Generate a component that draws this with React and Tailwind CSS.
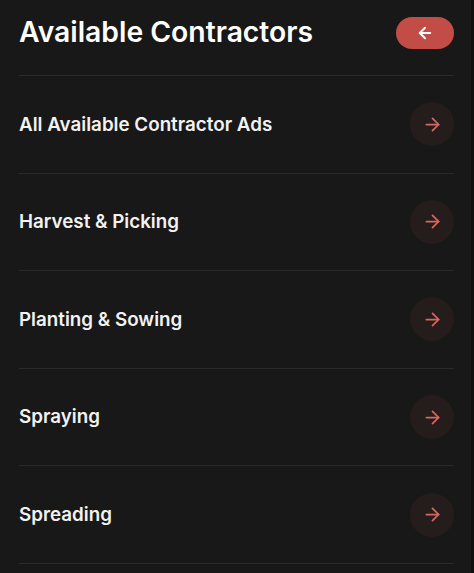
import React from 'react';

const categories = [
  'All Available Contractor Ads',
  'Harvest & Picking',
  'Planting & Sowing',
  'Spraying',
  'Spreading',
];

const ArrowRight = () => (
  <svg width="21" height="21" viewBox="0 0 24 24" fill="none" stroke="currentColor" strokeWidth="2" strokeLinecap="round" strokeLinejoin="round">
    <path d="M5 12h14" />
    <path d="m12 5 7 7-7 7" />
  </svg>
);

const ArrowLeft = () => (
  <svg width="18" height="18" viewBox="0 0 24 24" fill="none" stroke="currentColor" strokeWidth="2.5" strokeLinecap="round" strokeLinejoin="round">
    <path d="M19 12H5" />
    <path d="m12 19-7-7 7-7" />
  </svg>
);

const CategoryRow = ({ label }) => (
  <div className="flex items-center justify-between h-[97.6px] border-b border-[#2a2a2a] cursor-pointer">
    <p className="text-[18.8px] font-semibold text-[#f2f2f2] mt-[1px]">{label}</p>
    <div className="w-[44px] h-[44px] rounded-full bg-[#251c1c] flex items-center justify-center text-[#d8685f]">
      <ArrowRight />
    </div>
  </div>
);

export default function App() {
  return (
    <div
      className="w-[474px] h-[573px] overflow-hidden bg-[#181818] border-r-[3px] border-[#0f0f0f]"
      style={{ fontFamily: 'Inter, "Noto Sans", sans-serif' }}
    >
      <div className="pl-[19px] pr-[17px]">
        {/* Header */}
        <div className="flex items-center justify-between h-[76px] border-b border-[#2a2a2a]">
          <h1 className="text-[28.3px] font-semibold text-white -mt-[10px]">Available Contractors</h1>
          <button className="w-[58px] h-[32px] rounded-full bg-[#c24d46] flex items-center justify-center text-white -mt-[10px]">
            <ArrowLeft />
          </button>
        </div>

        {/* Categories */}
        <div className="flex flex-col">
          {categories.map((c) => (
            <CategoryRow key={c} label={c} />
          ))}
        </div>
      </div>
    </div>
  );
}
